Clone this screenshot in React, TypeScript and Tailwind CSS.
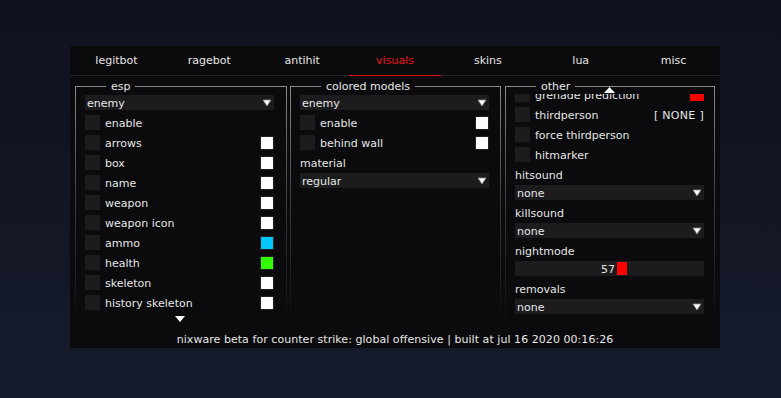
import React from "react";

const FONT = { fontFamily: '"DejaVu Sans", "Verdana", sans-serif' };

function DownTri({ className = "" }: { className?: string }) {
  return (
    <svg width="10" height="8" viewBox="0 0 10 8" className={className}>
      <polygon points="1,1 9,1 5,7" fill="#ffffff" stroke="#8a8a8a" strokeWidth="0.8" />
    </svg>
  );
}

function Dropdown({ value }: { value: string }) {
  return (
    <div className="flex h-[15px] w-[189px] items-center justify-between bg-[#1c1c1e] pl-[2px] pr-[2px]">
      <span className="pt-[1px] leading-none text-[#e6e6e6]">{value}</span>
      <DownTri />
    </div>
  );
}

function CheckRow({ label, color, right }: { label: string; color?: string; right?: string }) {
  return (
    <div className="flex h-[15px] w-[189px] items-center">
      <div className="h-[15px] w-[15px] shrink-0 bg-[#1c1c1e]" />
      <span className="ml-[5px] flex-1 pt-[1px] leading-none text-[#e6e6e6]">{label}</span>
      {color && <div className="h-[14px] w-[14px] border border-[#202020]" style={{ background: color }} />}
      {right && <span className="pt-[1px] leading-none tracking-[0.3px] text-[#e6e6e6]">{right}</span>}
    </div>
  );
}

function Label({ text }: { text: string }) {
  return <div className="flex h-[15px] items-center pt-[1px] leading-none text-[#e6e6e6]">{text}</div>;
}

function Panel({
  title,
  width,
  pr,
  children,
  topArrow,
  bottomArrow,
}: {
  title: string;
  width: string;
  pr: string;
  children: React.ReactNode;
  topArrow?: boolean;
  bottomArrow?: boolean;
}) {
  return (
    <div className={`relative flex h-[240px] flex-col ${width}`}>
      <div className="flex h-[1px] items-center">
        <div className="h-px w-[31px] bg-[#8a8a8a]" />
        <span className="px-[5px] leading-none text-[#e6e6e6]">{title}</span>
        <div className="h-px flex-1 bg-[#8a8a8a]" />
      </div>
      <div className="flex flex-1">
        <div className="w-px bg-gradient-to-b from-[#8a8a8a] via-[#3a3a3a] to-transparent" />
        <div className={`flex flex-1 flex-col overflow-hidden pl-[9px] ${pr}`}>{children}</div>
        <div className="w-px bg-gradient-to-b from-[#8a8a8a] via-[#3a3a3a] to-transparent" />
      </div>
      {topArrow && (
        <svg width="11" height="6" viewBox="0 0 11 6" className="absolute left-[99px] top-[1px]">
          <polygon points="0,6 11,6 5.5,0" fill="#ffffff" />
        </svg>
      )}
      {bottomArrow && (
        <svg width="10" height="6" viewBox="0 0 10 6" className="absolute bottom-[4px] left-[100px]">
          <polygon points="0,0 10,0 5,6" fill="#ffffff" />
        </svg>
      )}
    </div>
  );
}

export default function App() {
  const tabs = ["legitbot", "ragebot", "antihit", "visuals", "skins", "lua", "misc"];
  return (
    <div
      className="h-[398px] w-[781px] overflow-hidden bg-gradient-to-b from-[#10131e] via-[#121624] to-[#161b2d] pl-[70px] pt-[46px] text-[11px]"
      style={FONT}
    >
      <div className="flex h-[302px] w-[650px] flex-col bg-[#0b0b0d]">
        <div className="flex h-[30px] shrink-0 border-b border-[#252528]">
          {tabs.map((t) => (
            <div
              key={t}
              className={`-mb-px flex flex-1 items-center justify-center pt-[1px] ${
                t === "visuals" ? "border-b border-[#e01010] text-[#f01010]" : "text-[#e6e6e6]"
              }`}
            >
              {t}
            </div>
          ))}
        </div>
        <div className="mt-[10px] flex shrink-0 gap-[3px] px-[5px]">
          <Panel title="esp" width="w-[212px]" pr="pr-[12px]" bottomArrow>
            <div className="mt-[8px] flex flex-col gap-[5px]">
              <Dropdown value="enemy" />
              <CheckRow label="enable" />
              <CheckRow label="arrows" color="#ffffff" />
              <CheckRow label="box" color="#ffffff" />
              <CheckRow label="name" color="#ffffff" />
              <CheckRow label="weapon" color="#ffffff" />
              <CheckRow label="weapon icon" color="#ffffff" />
              <CheckRow label="ammo" color="#00c8ff" />
              <CheckRow label="health" color="#33ff00" />
              <CheckRow label="skeleton" color="#ffffff" />
              <CheckRow label="history skeleton" color="#ffffff" />
            </div>
          </Panel>
          <Panel title="colored models" width="w-[211px]" pr="pr-[11px]">
            <div className="mt-[8px] flex flex-col gap-[5px]">
              <Dropdown value="enemy" />
              <CheckRow label="enable" color="#ffffff" />
              <CheckRow label="behind wall" color="#ffffff" />
              <Label text="material" />
            </div>
            <div className="mt-[3px]">
              <Dropdown value="regular" />
            </div>
          </Panel>
          <div className="ml-[1px]">
            <Panel title="other" width="w-[210px]" pr="pr-[10px]" topArrow>
              <div className="mt-[7px] flex flex-1 flex-col overflow-hidden">
                <div className="-mt-[7px] flex flex-col gap-[5px]">
                  <div className="flex h-[15px] w-[189px] items-center">
                    <div className="h-[15px] w-[15px] shrink-0 bg-[#1c1c1e]" />
                    <span className="ml-[5px] flex-1 pt-[1px] leading-none text-[#e6e6e6]">grenade prediction</span>
                    <div className="mb-[1px] h-[7px] w-[14px] self-end bg-[#ff0000]" />
                  </div>
                  <CheckRow label="thirdperson" right="[ NONE ]" />
                  <CheckRow label="force thirdperson" />
                  <CheckRow label="hitmarker" />
                  <Label text="hitsound" />
                </div>
                <div className="mt-[3px]">
                  <Dropdown value="none" />
                </div>
                <div className="mt-[5px]">
                  <Label text="killsound" />
                </div>
                <div className="mt-[3px]">
                  <Dropdown value="none" />
                </div>
                <div className="mt-[5px]">
                  <Label text="nightmode" />
                </div>
                <div className="mt-[3px] flex h-[15px] w-[189px] items-center bg-[#1c1c1e]">
                  <div className="flex w-[112px] items-center justify-end">
                    <span className="pt-[1px] leading-none text-[#e6e6e6]">57</span>
                    <div className="ml-[2px] h-[13px] w-[10px] bg-[#ff0000]" />
                  </div>
                </div>
                <div className="mt-[5px]">
                  <Label text="removals" />
                </div>
                <div className="mt-[3px]">
                  <Dropdown value="none" />
                </div>
              </div>
            </Panel>
          </div>
        </div>
        <div className="flex flex-1 items-center justify-center pt-[4px] leading-none tracking-[0.05px] text-[#e6e6e6]">
          nixware beta for counter strike: global offensive | built at jul 16 2020 00:16:26
        </div>
      </div>
    </div>
  );
}
